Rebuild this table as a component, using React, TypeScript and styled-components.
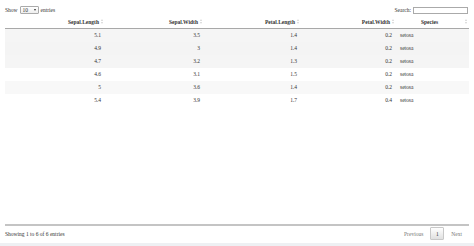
import React from "react";
import styled, { createGlobalStyle } from "styled-components";

const Global = createGlobalStyle`
  html, body { margin: 0; padding: 0; background: #fff; }
  body { font-family: "Liberation Serif", "Times New Roman", serif; color: #333; }
  * { box-sizing: border-box; }
`;

const Page = styled.div`
  width: 474px;
  height: 246px;
  display: flex;
  flex-direction: column;
  overflow: hidden;
`;

const Wrapper = styled.div`
  flex: 1;
  display: flex;
  flex-direction: column;
  padding: 5px 5px 0;
  min-height: 0;
`;

const Controls = styled.div`
  display: flex;
  justify-content: space-between;
  align-items: center;
  height: 10px;
  font-size: 5.5px;
`;

const Group = styled.label`
  display: flex;
  align-items: center;
  gap: 2px;
`;

const SelectBox = styled.span`
  position: relative;
  display: inline-flex;
  width: 19px;
  height: 8px;
`;

const Select = styled.select`
  appearance: none;
  width: 100%;
  height: 100%;
  margin: 0;
  padding: 0 0 0 2px;
  border: 1px solid #aaa;
  border-radius: 1px;
  background: linear-gradient(#fff, #eee);
  font: inherit;
  font-size: 5.5px;
  color: #333;
  line-height: 6px;
`;

const Caret = styled.span`
  position: absolute;
  right: 3px;
  top: 3px;
  width: 0;
  height: 0;
  border-left: 1.5px solid transparent;
  border-right: 1.5px solid transparent;
  border-top: 2px solid #333;
  pointer-events: none;
`;

const SearchInput = styled.input`
  width: 55px;
  height: 7px;
  margin: 0 1px 0 0;
  padding: 0;
  border: 1px solid #aaa;
  background: #fff;
`;

const ScrollHead = styled.div`
  margin-top: 1px;
`;

const Table = styled.table`
  width: 464px;
  table-layout: fixed;
  border-collapse: collapse;
  border-spacing: 0;
  font-size: 5.5px;
`;

const Th = styled.th`
  height: 12px;
  padding: 0;
  font-weight: bold;
  color: #333;
  border-bottom: 1px solid #a8a8a8;
`;

const HeadInner = styled.div<{ $align: "right" | "center" }>`
  display: flex;
  align-items: center;
  gap: 2px;
  padding-right: 2px;
  & > span:first-child {
    flex: 1;
    text-align: ${(p) => p.$align};
    white-space: nowrap;
  }
`;

const ScrollBody = styled.div`
  flex: 1;
  border-bottom: 2px solid #c4c4c4;
`;

const Tr = styled.tr<{ $bg: string }>`
  background: ${(p) => p.$bg};
  & + & > td { border-top: 1px solid #e2e2e2; }
`;

const Td = styled.td<{ $align: "right" | "left" }>`
  height: 13px;
  padding: 0 4px;
  text-align: ${(p) => p.$align};
  color: #333;
  white-space: nowrap;
`;

const Footer = styled.div`
  height: 15px;
  margin-bottom: 2px;
  display: flex;
  align-items: center;
  justify-content: space-between;
  font-size: 5.5px;
`;

const Info = styled.div`
  padding-left: 0;
`;

const Pager = styled.div`
  display: flex;
  align-items: center;
  padding-right: 0;
`;

const PageLink = styled.span<{ $current?: boolean }>`
  display: inline-flex;
  align-items: center;
  justify-content: center;
  height: 13px;
  min-width: ${(p) => (p.$current ? "14px" : "0")};
  padding: 0 ${(p) => (p.$current ? "0" : "6px")};
  color: ${(p) => (p.$current ? "#333" : "#777")};
  border: 1px solid ${(p) => (p.$current ? "#c8c8c8" : "transparent")};
  border-radius: 1px;
  background: ${(p) => (p.$current ? "linear-gradient(#fff, #e0e0e0)" : "transparent")};
`;

const BottomStrip = styled.div`
  height: 3px;
  background: #eef0f3;
`;

const SortIcon = () => (
  <svg width="2" height="5" viewBox="0 0 4 10" aria-hidden>
    <path d="M2 0 L4 4 L0 4 Z" fill="#d4d4d4" />
    <path d="M0 6 L4 6 L2 10 Z" fill="#d4d4d4" />
  </svg>
);

const columns = [
  { name: "Sepal.Length", width: 100, align: "right" as const },
  { name: "Sepal.Width", width: 99, align: "right" as const },
  { name: "Petal.Length", width: 97, align: "right" as const },
  { name: "Petal.Width", width: 95, align: "right" as const },
  { name: "Species", width: 73, align: "left" as const },
];

const rows = [
  ["5.1", "3.5", "1.4", "0.2", "setosa"],
  ["4.9", "3", "1.4", "0.2", "setosa"],
  ["4.7", "3.2", "1.3", "0.2", "setosa"],
  ["4.6", "3.1", "1.5", "0.2", "setosa"],
  ["5", "3.6", "1.4", "0.2", "setosa"],
  ["5.4", "3.9", "1.7", "0.4", "setosa"],
];

const rowBg = ["#f5f5f5", "#f4f4f4", "#f5f5f5", "#ffffff", "#f8f8f8", "#ffffff"];

const Colgroup = () => (
  <colgroup>
    {columns.map((c) => (
      <col key={c.name} style={{ width: c.width }} />
    ))}
  </colgroup>
);

export default function App() {
  return (
    <Page>
      <Global />
      <Wrapper>
        <Controls>
          <Group>
            Show
            <SelectBox>
              <Select defaultValue="10">
                <option value="10">10</option>
                <option value="25">25</option>
                <option value="50">50</option>
                <option value="100">100</option>
              </Select>
              <Caret />
            </SelectBox>
            entries
          </Group>
          <Group>
            Search:
            <SearchInput type="search" />
          </Group>
        </Controls>
        <ScrollHead>
          <Table>
            <Colgroup />
            <thead>
              <tr>
                {columns.map((c) => (
                  <Th key={c.name}>
                    <HeadInner $align={c.align === "right" ? "right" : "center"}>
                      <span>{c.name}</span>
                      <SortIcon />
                    </HeadInner>
                  </Th>
                ))}
              </tr>
            </thead>
          </Table>
        </ScrollHead>
        <ScrollBody>
          <Table>
            <Colgroup />
            <tbody>
              {rows.map((r, i) => (
                <Tr key={i} $bg={rowBg[i]}>
                  {r.map((v, j) => (
                    <Td key={j} $align={columns[j].align}>
                      {v}
                    </Td>
                  ))}
                </Tr>
              ))}
            </tbody>
          </Table>
        </ScrollBody>
        <Footer>
          <Info>Showing 1 to 6 of 6 entries</Info>
          <Pager>
            <PageLink>Previous</PageLink>
            <PageLink $current>1</PageLink>
            <PageLink>Next</PageLink>
          </Pager>
        </Footer>
      </Wrapper>
      <BottomStrip />
    </Page>
  );
}
